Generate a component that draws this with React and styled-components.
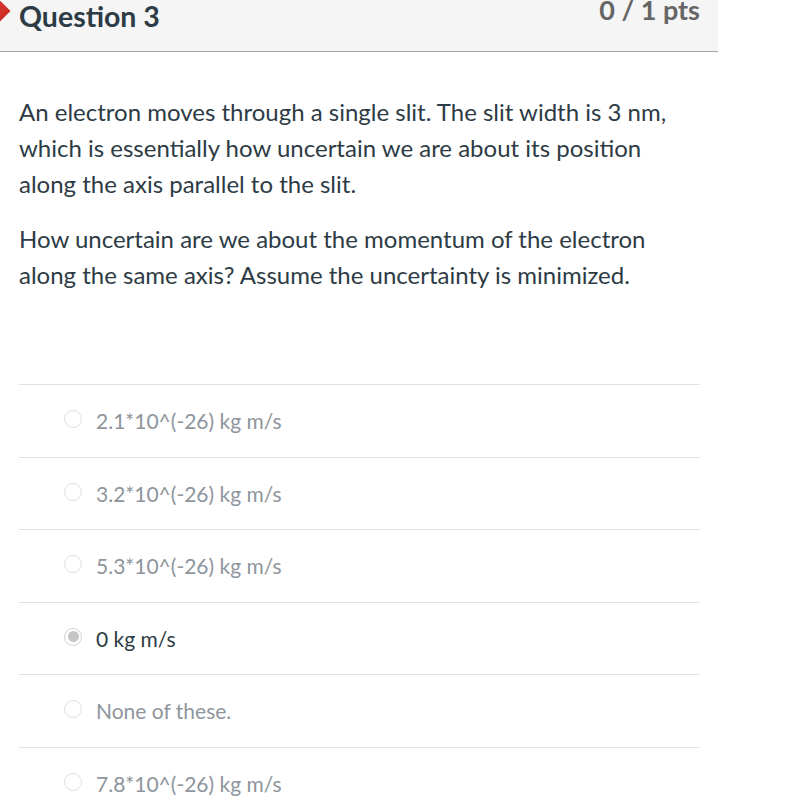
import React from "react";
import styled, { createGlobalStyle } from "styled-components";

const Global = createGlobalStyle`
  html, body { margin: 0; padding: 0; background: #fff; }
  body { font-family: Lato, "Noto Sans", sans-serif; color: #2d3b45; }
`;

const Page = styled.div`
  position: relative;
  width: 797px;
  min-height: 810px;
  overflow: hidden;
`;

const Header = styled.header`
  width: 718px;
  height: 51px;
  box-sizing: content-box;
  background: #f5f5f5;
  border-bottom: 1px solid #a8a8a8;
  display: flex;
  justify-content: space-between;
  align-items: flex-start;
`;

const Title = styled.h2`
  margin: 0;
  padding: 0 0 0 19px;
  font-size: 28.5px;
  font-weight: 700;
  line-height: 32px;
  color: #2d3b45;
`;

const Points = styled.div`
  padding: 0 18px 0 0;
  font-size: 27px;
  font-weight: 700;
  line-height: 20px;
  color: #666;
`;

const Marker = styled.svg`
  position: absolute;
  left: -13px;
  top: -1px;
  width: 24px;
  height: 24px;
`;

const Body = styled.div`
  padding: 42px 0 0 19px;
  width: 681px;
`;

const Para = styled.p`
  margin: 0 0 19px;
  font-size: 24px;
  line-height: 36px;
  color: #2d3b45;
`;

const Answers = styled.div`
  margin-top: 91px;
  display: flex;
  flex-direction: column;
`;

const Answer = styled.label`
  height: 72.5px;
  box-sizing: border-box;
  border-top: 1px solid #e3e3e3;
  display: flex;
  align-items: center;
  padding: 0 0 0 45px;
  gap: 14px;
  font-size: 21px;
  color: ${(p) => (p.$selected ? "#2d3b45" : "#8e959c")};
`;

const Radio = styled.span`
  width: 18px;
  height: 18px;
  box-sizing: border-box;
  border-radius: 50%;
  border: 1.5px solid ${(p) => (p.$checked ? "#d2d2d2" : "#e0e0e0")};
  background: #fff;
  display: flex;
  align-items: center;
  justify-content: center;
  flex: none;
  margin-top: -3px;
  &::after {
    content: "";
    width: 11px;
    height: 11px;
    border-radius: 50%;
    background: ${(p) => (p.$checked ? "#c6c6c6" : "transparent")};
  }
`;

const answers = [
  { text: "2.1*10^(-26) kg m/s" },
  { text: "3.2*10^(-26) kg m/s" },
  { text: "5.3*10^(-26) kg m/s" },
  { text: "0 kg m/s", selected: true },
  { text: "None of these." },
  { text: "7.8*10^(-26) kg m/s" },
];

export default function App() {
  return (
    <Page>
      <Global />
      <Header>
        <Title>Question 3</Title>
        <Points>0 / 1 pts</Points>
      </Header>
      <Marker viewBox="0 0 24 24">
        <defs>
          <linearGradient id="rg" x1="0" y1="0" x2="1" y2="1">
            <stop offset="0" stopColor="#e0423a" />
            <stop offset="1" stopColor="#c8221d" />
          </linearGradient>
        </defs>
        <polygon points="12,0.5 23.5,12 12,23.5 0.5,12" fill="url(#rg)" />
      </Marker>
      <Body>
        <Para>
          An electron moves through a single slit. The slit width is 3 nm,
          which is essentially how uncertain we are about its position along
          the axis parallel to the slit.
        </Para>
        <Para>
          How uncertain are we about the momentum of the electron along the
          same axis? Assume the uncertainty is minimized.
        </Para>
        <Answers>
          {answers.map((a, i) => (
            <Answer key={i} $selected={a.selected}>
              <Radio $checked={a.selected} />
              {a.text}
            </Answer>
          ))}
        </Answers>
      </Body>
    </Page>
  );
}
